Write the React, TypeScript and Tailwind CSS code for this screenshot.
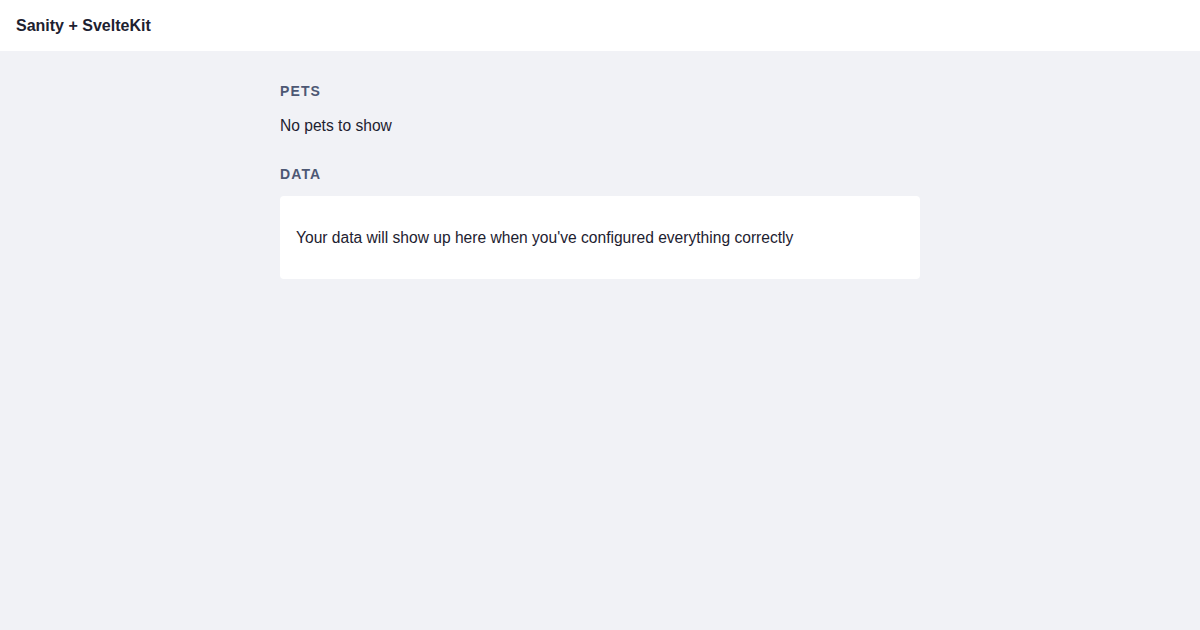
export default function App() {
  return (
    <div className="min-h-[630px] bg-[#f1f2f6] font-['Liberation_Sans',Arial,sans-serif] text-[#1d2130]">
      {/* header */}
      <header className="flex h-[51px] items-center bg-white px-4">
        <span className="text-base font-bold text-[#1d2130]">Sanity + SvelteKit</span>
      </header>

      <main className="mx-auto w-[640px] pt-[30px]">
        <h2 className="text-sm leading-5 font-bold tracking-[0.08em] text-[#4d5874]">PETS</h2>
        <p className="mt-[13px] text-[15.6px] leading-6">No pets to show</p>

        <h2 className="mt-[26px] text-sm leading-5 font-bold tracking-[0.08em] text-[#4d5874]">DATA</h2>
        <div className="mt-3 h-[83px] rounded bg-white px-4 py-[30px]">
          <p className="text-[15.6px] leading-6">
            Your data will show up here when you've configured everything correctly
          </p>
        </div>
      </main>
    </div>
  )
}
